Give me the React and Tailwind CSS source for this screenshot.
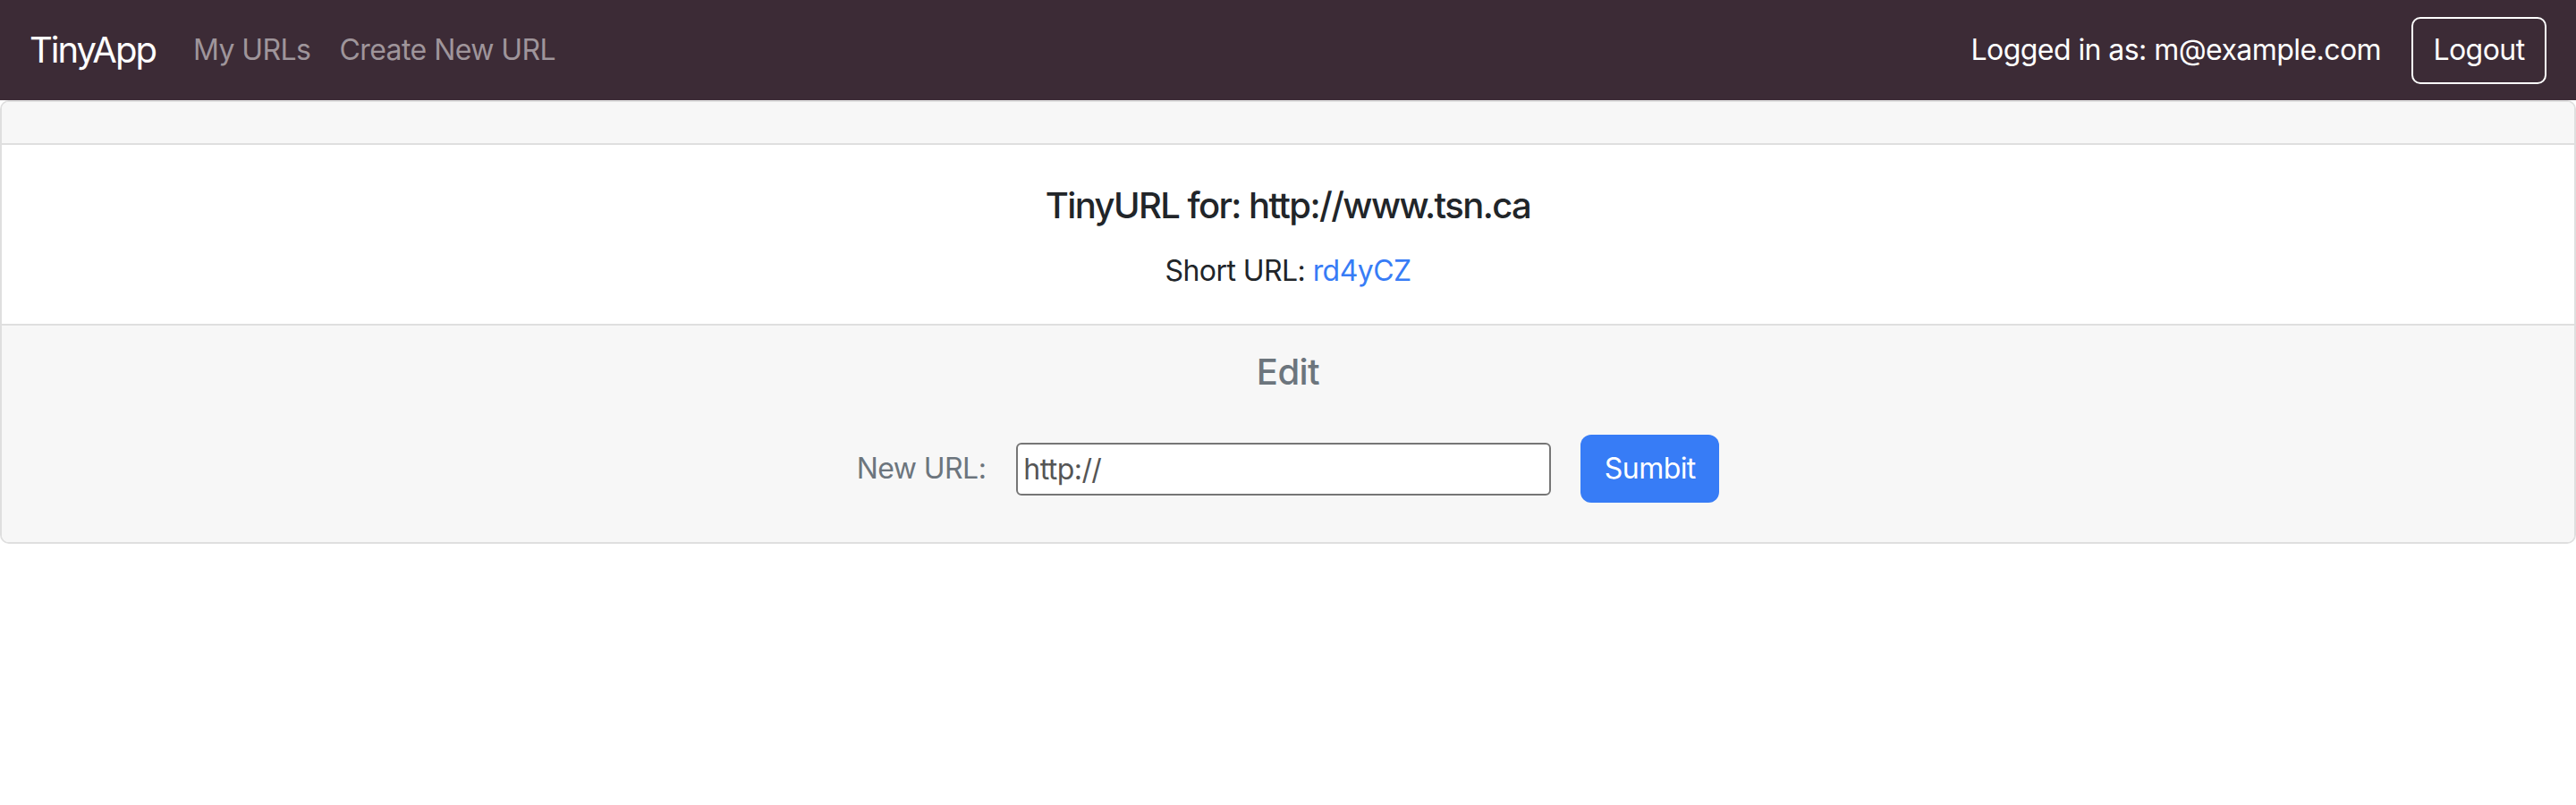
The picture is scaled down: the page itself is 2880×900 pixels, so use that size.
export default function App() {
  return (
    <div className="min-h-screen bg-white font-[Inter,sans-serif] tracking-[-0.035em] text-[#212529]">
      {/* Navbar */}
      <nav className="h-[112px] bg-[#3c2b36] flex items-center justify-between px-[33px]">
        <div className="flex items-center">
          <a className="text-[40px] leading-[60px] text-white tracking-[-0.05em] mr-[26px]">TinyApp</a>
          <a className="text-[32px] leading-[48px] text-[#9f959b] px-[16px]">My URLs</a>
          <a className="text-[32px] leading-[48px] text-[#9f959b] px-[16px]">Create New URL</a>
        </div>
        <div className="flex items-center gap-[34px]">
          <span className="text-[32px] leading-[48px] text-white">Logged in as: m@example.com</span>
          <button className="w-[151px] h-[75px] border-2 border-white rounded-[10px] text-[32px] text-white">
            Logout
          </button>
        </div>
      </nav>

      {/* Card */}
      <div className="border-2 border-[#dfdfdf] rounded-[10px] overflow-hidden">
        <div className="h-[48px] bg-[#f7f7f7] border-b-2 border-[#dfdfdf]" />
        <div className="pt-[44px] pb-[35px] text-center">
          <h5 className="text-[40px] leading-[48px] font-medium tracking-[-0.04em] mb-[25px]">TinyURL for: http://www.tsn.ca</h5>
          <p className="text-[32px] leading-[48px]">
            Short URL: <a className="text-[#377cf6]">rd4yCZ</a>
          </p>
        </div>
        <div className="bg-[#f7f7f7] border-t-2 border-[#dfdfdf] pt-[28px] pb-[44px] text-center">
          <h5 className="text-[40px] leading-[48px] font-medium text-[#6c757d]">Edit</h5>
          <form className="mt-[46px] flex items-center justify-center">
            <label className="text-[32px] leading-[48px] text-[#6c757d] mr-[34px]">New URL:</label>
            <input
              type="text"
              defaultValue="http://"
              className="w-[598px] h-[59px] border-2 border-[#767676] rounded-[6px] bg-white px-[6px] text-[32px] text-[#555] outline-none"
            />
            <button
              type="button"
              className="ml-[33px] w-[155px] h-[76px] bg-[#377cf6] rounded-[12px] text-[32px] text-white"
            >
              Sumbit
            </button>
          </form>
        </div>
      </div>
    </div>
  )
}
